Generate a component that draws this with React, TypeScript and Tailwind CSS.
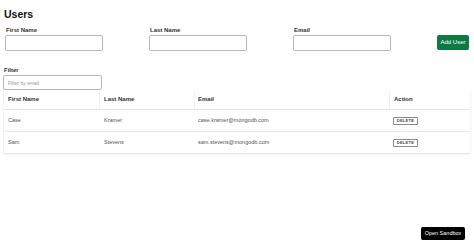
import React from "react";

const users = [
  { first: "Case", last: "Kramer", email: "case.kramer@mongodb.com" },
  { first: "Sam", last: "Stevens", email: "sam.stevens@mongodb.com" },
];

function Field({ label }: { label: string }) {
  return (
    <div className="flex flex-col">
      <label className="text-[6px] font-bold leading-[8px] text-[#333] pl-[1px] mb-[1px]">{label}</label>
      <input className="w-[98px] h-[16px] border border-[#b8b8b8] rounded-[2px] bg-white outline-none" />
    </div>
  );
}

export default function App() {
  return (
    <div className="relative w-[474px] h-[248px] bg-white font-['Liberation_Sans',Arial,sans-serif] overflow-hidden">
      <div className="pt-[7px]">
        <h1 className="pl-[4px] text-[10.5px] font-bold leading-[14px] text-[#111]">Users</h1>
        <div className="mt-[5px] ml-[5px] grid grid-cols-[144px_144px_144px_auto] items-end">
          <Field label="First Name" />
          <Field label="Last Name" />
          <Field label="Email" />
          <div>
            <button className="w-[32px] h-[15px] bg-[#0b7a45] text-white text-[6px] rounded-[2px] leading-none mb-[1px]">
              Add User
            </button>
          </div>
        </div>
        <div className="mt-[15px] ml-[3px] flex flex-col">
          <label className="text-[6px] font-bold leading-[8px] text-[#333] pl-[1px] mb-[1px]">Filter</label>
          <input
            placeholder="Filter by email"
            className="w-[99px] h-[15px] border border-[#b8b8b8] rounded-[2px] px-[4px] text-[5px] placeholder:text-[#999] outline-none"
          />
        </div>
        <div className="ml-[3px] w-[467px] shadow-[1px_1px_2px_rgba(0,0,0,0.05)] border-l border-[#f3f3f3]">
          <div className="grid grid-cols-[96px_95px_195px_81px] h-[20px] border-b border-[#e3e3e3] text-[6px] font-bold text-[#333]">
            <div className="flex items-center pl-[4px] border-r border-[#f0f0f0]">First Name</div>
            <div className="flex items-center pl-[4px] border-r border-[#f0f0f0]">Last Name</div>
            <div className="flex items-center pl-[3px] border-r border-[#f0f0f0]">Email</div>
            <div className="flex items-center pl-[4px]">Action</div>
          </div>
          {users.map((u) => (
            <div key={u.email} className="grid grid-cols-[96px_95px_195px_81px] h-[22px] border-b border-[#e8e8e8] text-[5.5px] text-[#555]">
              <div className="flex items-center pl-[4px]">{u.first}</div>
              <div className="flex items-center pl-[4px]">{u.last}</div>
              <div className="flex items-center pl-[3px]">{u.email}</div>
              <div className="flex items-center pl-[3px]">
                <button className="flex items-center justify-center whitespace-nowrap w-[25px] h-[8px] p-0 border border-[#8a8a8a] rounded-[1px] text-[4px] font-bold tracking-[0.3px] text-[#444] leading-none">
                  DELETE
                </button>
              </div>
            </div>
          ))}
        </div>
      </div>
      <button className="absolute right-[9px] bottom-[8px] w-[44px] h-[13px] bg-black text-white text-[5.5px] rounded-[2px] leading-none">
        Open Sandbox
      </button>
    </div>
  );
}
